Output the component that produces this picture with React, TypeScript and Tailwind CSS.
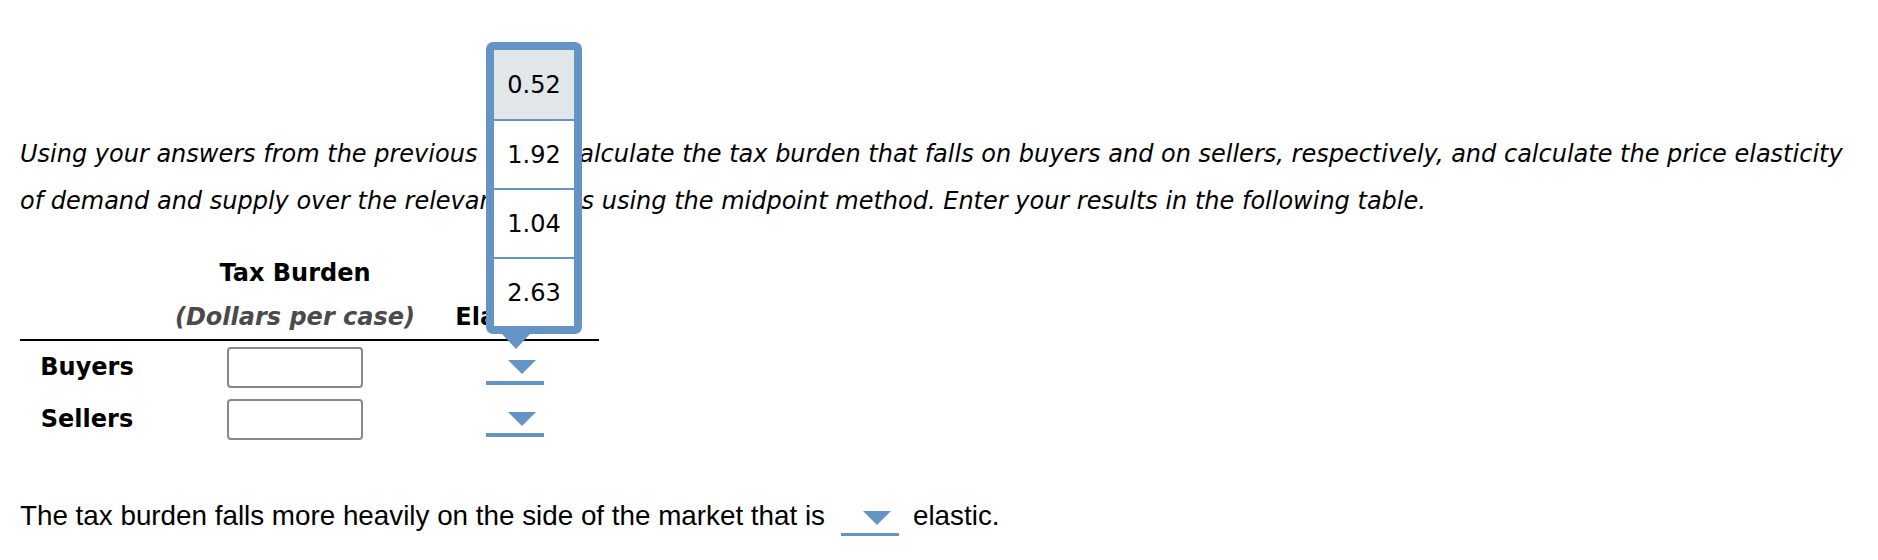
import type { ReactNode } from 'react';

const BLUE = '#6593c4';

function Caret({ className = '' }: { className?: string }) {
  return (
    <svg width="28" height="14" viewBox="0 0 28 14" className={className}>
      <polygon points="0,0 28,0 14,14" fill={BLUE} />
    </svg>
  );
}

// dropdown trigger: caret sitting over a thick underline
function Dropdown({ children, line = 'border-b-4' }: { children?: ReactNode; line?: string }) {
  return (
    <div className={`relative h-[25px] w-[58px] shrink-0 border-[#6593c4] ${line}`}>
      <Caret className="ml-[22px]" />
      {children}
    </div>
  );
}

const options = ['0.52', '1.92', '1.04', '2.63'];

function OptionsPopup() {
  return (
    <div className="absolute bottom-[32px] left-0 z-10 flex flex-col">
      <div className="w-[96px] overflow-hidden rounded-[7px] border-8 border-[#6593c4] bg-white">
        {options.map((opt, i) => (
          <div
            key={opt}
            className={`flex h-[69px] items-center justify-center text-[24px] text-black ${
              i === 0 ? 'bg-[#e1e6e9]' : 'border-t-2 border-[#6593c4]'
            }`}
          >
            {opt}
          </div>
        ))}
      </div>
      <svg width="28" height="15" viewBox="0 0 28 15" className="ml-[16px]">
        <polygon points="0,0 28,0 14,15" fill={BLUE} />
      </svg>
    </div>
  );
}

export default function App() {
  return (
    <div className="min-h-[560px] bg-white px-[20px] pt-[131px] text-black" style={{ fontFamily: '"DejaVu Sans", Verdana, sans-serif' }}>
      <p className="text-[24px] italic leading-[46.5px]">
        Using your answers from the previous <span className="ml-[4px]">parts, calculate</span> the tax burden that falls
        on buyers and on sellers, respectively, and calculate the price elasticity of demand and supply over the relevant
        ranges using the midpoint method. Enter your results in the following table.
      </p>

      <div className="mt-[27px] w-[579px] text-[24px]">
        <div className="grid grid-cols-[134px_282px_163px]">
          <div className="h-[44px]" />
          <div className="flex h-[44px] items-center justify-center font-bold">Tax Burden</div>
          <div className="h-[44px]" />

          <div className="h-[44px]" />
          <div className="flex h-[44px] items-center justify-center font-bold italic text-[#4a4a4a]">
            (Dollars per case)
          </div>
          <div className="flex h-[44px] items-center justify-center font-bold">Elasticity</div>
        </div>

        <div className="h-[2px] bg-black" />

        <div className="grid grid-cols-[134px_282px_163px]">
          <div className="flex h-[52px] items-center justify-center font-bold">Buyers</div>
          <div className="flex h-[52px] items-center justify-center">
            <div className="h-[41px] w-[136px] rounded-[4px] border-2 border-[#888888]" />
          </div>
          <div className="flex h-[52px] items-center pl-[50px]">
            <div className="mt-[11px]">
              <Dropdown>
                <OptionsPopup />
              </Dropdown>
            </div>
          </div>

          <div className="flex h-[52px] items-center justify-center font-bold">Sellers</div>
          <div className="flex h-[52px] items-center justify-center">
            <div className="h-[41px] w-[136px] rounded-[4px] border-2 border-[#888888]" />
          </div>
          <div className="flex h-[52px] items-center pl-[50px]">
            <div className="mt-[11px]">
              <Dropdown />
            </div>
          </div>
        </div>
      </div>

      <div
        className="mt-[51px] flex h-[40px] items-center text-[27.8px] text-black"
        style={{ fontFamily: '"Liberation Sans", Arial, sans-serif' }}
      >
        <span>The tax burden falls more heavily on the side of the market that is</span>
        <div className="ml-[16px] mt-[14px]">
          <Dropdown line="border-b-[3px]" />
        </div>
        <span className="ml-[14px]">elastic.</span>
      </div>
    </div>
  );
}
